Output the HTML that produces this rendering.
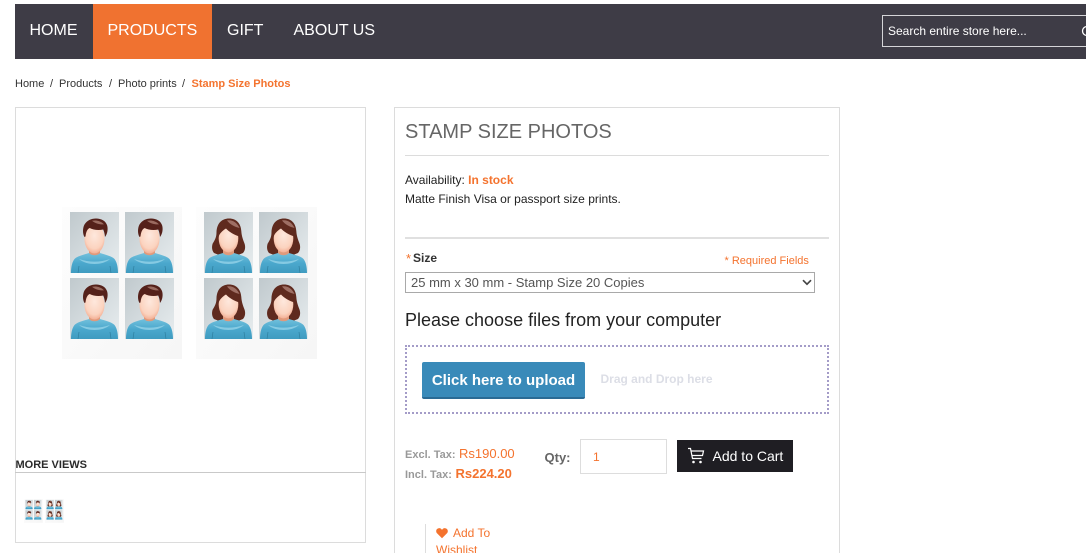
<!DOCTYPE html>
<html lang="en">
<head>
<meta charset="utf-8">
<title>Stamp Size Photos</title>
<style>
html,body{margin:0;padding:0;width:1086px;height:553px;overflow:hidden;background:#fff;font-family:"Liberation Sans",Arial,sans-serif;}
#wrap{position:relative;width:1086px;height:553px;overflow:hidden;background:#fff;}
.a{position:absolute;white-space:nowrap;}
.o{color:#f4732e;}
</style>
</head>
<body>
<div id="wrap">
<svg width="0" height="0" style="position:absolute">
<defs>
<linearGradient id="bg" x1="0" y1="0" x2="1" y2="1"><stop offset="0" stop-color="#c0c9cd"/><stop offset=".55" stop-color="#d6dde0"/><stop offset="1" stop-color="#e8edef"/></linearGradient>
<linearGradient id="shirt" x1="0" y1="0" x2="0" y2="1"><stop offset="0" stop-color="#72c0dc"/><stop offset=".5" stop-color="#4ba8cd"/><stop offset="1" stop-color="#3f9bc0"/></linearGradient>
<radialGradient id="skin" cx=".5" cy=".38" r=".65"><stop offset="0" stop-color="#fee8dd"/><stop offset=".7" stop-color="#fbd3bf"/><stop offset="1" stop-color="#f2a98d"/></radialGradient>
<linearGradient id="sheet" x1="0" y1="0" x2="1" y2="1"><stop offset="0" stop-color="#fdfdfd"/><stop offset="1" stop-color="#f6f6f6"/></linearGradient>
<symbol id="shoulders" viewBox="0 0 49 61">
<path d="M19 34h11v8c0 2-2.500 3.500-5.500 3.500S19 44 19 42z" fill="#e09a7c"/>
<path d="M1 61c0-7 1.500-12 4-14.500 3-2.500 9-4 14-5.500 1.300 1.600 3.200 2.200 5.500 2.200s4.200-.6 5.500-2.200c5 1.500 11 3 14 5.500 2.500 2.500 4 7.500 4 14.500z" fill="url(#shirt)"/>
<path d="M9 47c5 1.800 10.500 2.600 15.500 2.600S35 48.800 40 47c-4 3.500-10 5-15.500 5S13 50.500 9 47z" fill="#9ad6e9" opacity=".75"/>
<path d="M8 61l1-7M41 61l-1-7" stroke="#2f7f9f" stroke-width=".7"/>
</symbol>
<symbol id="man" viewBox="0 0 49 61">
<rect width="49" height="61" fill="url(#bg)"/>
<use href="#shoulders" width="49" height="61"/>
<ellipse cx="24.500" cy="27" rx="10" ry="14.500" fill="url(#skin)"/>
<path d="M14.500 25C12.500 22 12.500 16 14.500 12.500 17 8.500 21 6.500 26 6.500c5.500 0 9.500 2.500 11 6.500 1.200 3.500.7 8.500-2 12-.3-3-.8-5.500-1.800-7.500-4.500 1-10 .5-13.500-1.500-2.500 1-3.700 4-4.200 8.500z" fill="#55211a"/>
<path d="M22 8.800c4-1 9 .2 12 3.500-3.500.5-8.500-.5-12-3.500z" fill="#9a6b60"/>
</symbol>
<symbol id="woman" viewBox="0 0 49 61">
<rect width="49" height="61" fill="url(#bg)"/>
<path d="M12.500 20C13 11 18 6.500 25 6.500c7.500 0 11.800 5 12.300 12.500.3 5 1.700 8.500 3.200 12.500 1.200 3.500.7 7-1.500 9.500l-5 2H15l-5-2c-2-2.500-2.500-6-1.300-9.500 2.500-4 3.800-6.500 3.800-11.500z" fill="#5f2a1e"/>
<use href="#shoulders" width="49" height="61"/>
<ellipse cx="24.500" cy="26.500" rx="9.800" ry="14" fill="url(#skin)"/>
<path d="M14.200 26C13 17 18 9 25 8.500c6.500-.5 11 4.500 10.500 16-5-1.500-10.500-4.500-13.500-8-3.500 2-6.700 5-7.800 9.500z" fill="#5f2a1e"/>
<path d="M23 8.500c5-1 10 2 12.500 7.500-4.500-1-9.500-3.500-12.500-7.500z" fill="#9e6f64"/>
</symbol>
<symbol id="sheets" viewBox="0 0 255 153">
<rect x="0" y="0" width="120" height="152" fill="url(#sheet)"/>
<rect x="134" y="0" width="121" height="152" fill="url(#sheet)"/>
<use href="#man" x="8" y="5" width="49" height="61"/>
<use href="#man" x="63" y="5" width="49" height="61"/>
<use href="#man" x="8" y="71" width="49" height="61"/>
<use href="#man" x="63" y="71" width="49" height="61"/>
<use href="#woman" x="142" y="5" width="49" height="61"/>
<use href="#woman" x="197" y="5" width="49" height="61"/>
<use href="#woman" x="142" y="71" width="49" height="61"/>
<use href="#woman" x="197" y="71" width="49" height="61"/>
</symbol>
</defs>
</svg>

<!-- nav -->
<div class="a" style="left:15px;top:4px;width:1071px;height:55px;background:#3e3c46"></div>
<div class="a" style="left:93px;top:4px;width:119px;height:55px;background:#f07230"></div>
<div class="a" style="left:29.500px;top:22px;font-size:16px;line-height:18px;color:#fff">HOME</div>
<div class="a" style="left:107.500px;top:22px;font-size:16px;line-height:18px;color:#fff">PRODUCTS</div>
<div class="a" style="left:227px;top:22px;font-size:16px;line-height:18px;color:#fff">GIFT</div>
<div class="a" style="left:293.500px;top:22px;font-size:16px;line-height:18px;color:#fff">ABOUT US</div>
<div class="a" style="left:882px;top:15px;width:204px;height:32px;box-sizing:border-box;border:1px solid #d5d5d8;border-right:0"></div>
<div class="a" style="left:888px;top:24px;font-size:12px;line-height:15px;color:#fff">Search entire store here...</div>
<svg class="a" style="left:1080px;top:24px" width="6" height="15" viewBox="0 0 6 15"><circle cx="7" cy="7" r="4.500" fill="none" stroke="#fff" stroke-width="1.300"/></svg>

<!-- breadcrumb -->
<div class="a" style="left:15px;top:77px;font-size:11px;line-height:14px;color:#333">Home</div>
<div class="a" style="left:50px;top:77px;font-size:11px;line-height:14px;color:#333">/</div>
<div class="a" style="left:59px;top:77px;font-size:11px;line-height:14px;color:#333">Products</div>
<div class="a" style="left:109px;top:77px;font-size:11px;line-height:14px;color:#333">/</div>
<div class="a" style="left:118px;top:77px;font-size:11px;line-height:14px;color:#333">Photo prints</div>
<div class="a" style="left:182px;top:77px;font-size:11px;line-height:14px;color:#333">/</div>
<div class="a o" style="left:191.500px;top:77px;font-size:11px;line-height:14px;font-weight:bold">Stamp Size Photos</div>

<!-- left panel -->
<div class="a" style="left:15px;top:107px;width:351px;height:436px;box-sizing:border-box;border:1px solid #dcdcdc"></div>
<svg class="a" style="left:62px;top:207px" width="255" height="153"><use href="#sheets" width="255" height="153"/></svg>
<div class="a" style="left:15.500px;top:459px;font-size:11px;line-height:13px;font-weight:bold;color:#2a2a2a">MORE VIEWS</div>
<div class="a" style="left:15px;top:472px;width:351px;height:1px;background:#c9c9c9"></div>
<svg class="a" style="left:24px;top:499px" width="40" height="24"><use href="#sheets" width="40" height="24"/></svg>

<!-- right panel -->
<div class="a" style="left:394px;top:107px;width:446px;height:460px;box-sizing:border-box;border:1px solid #dcdcdc"></div>
<div class="a" style="left:405px;top:119.500px;font-size:20px;line-height:24px;color:#666">STAMP SIZE PHOTOS</div>
<div class="a" style="left:405px;top:155px;width:424px;height:1px;background:#dcdcdc"></div>
<div class="a" style="left:405px;top:173px;font-size:12px;line-height:14px;color:#222">Availability: <b class="o">In stock</b></div>
<div class="a" style="left:405px;top:192px;font-size:12px;line-height:14px;color:#222">Matte Finish Visa or passport size prints.</div>
<div class="a" style="left:405px;top:237px;width:424px;height:2px;background:#e0e0e0"></div>
<div class="a o" style="left:406px;top:251px;font-size:13px;line-height:15px">*</div>
<div class="a" style="left:413px;top:251px;font-size:12px;line-height:15px;font-weight:bold;color:#333">Size</div>
<div class="a o" style="left:724.500px;top:254px;font-size:11px;line-height:14px">* Required Fields</div>
<div class="a" style="left:405px;top:272px;width:410px;height:21px;box-sizing:border-box;border:1px solid #a9a9a9;background:#fff"></div>
<div class="a" style="left:411px;top:275px;font-size:13px;line-height:15px;color:#555">25 mm x 30 mm - Stamp Size 20 Copies</div>
<svg class="a" style="left:802px;top:279px" width="10" height="7" viewBox="0 0 10 7"><path d="M1 1.200l4 4 4-4" fill="none" stroke="#444" stroke-width="1.700"/></svg>
<div class="a" style="left:405px;top:309px;font-size:18px;line-height:22px;color:#222">Please choose files from your computer</div>
<div class="a" style="left:405px;top:345px;width:424px;height:69px;box-sizing:border-box;border:2px dotted #a49cc8"></div>
<div class="a" style="left:422px;top:362px;width:163px;height:37px;box-sizing:border-box;background:#398ab9;border-bottom:2px solid #2a6a94;border-radius:2px;color:#fff;font-size:15px;font-weight:bold;line-height:37px;text-align:center">Click here to upload</div>
<div class="a" style="left:600.500px;top:372px;font-size:12px;line-height:14px;font-weight:bold;color:#dcdee6">Drag and Drop here</div>

<!-- price -->
<div class="a" style="left:405px;top:449px;font-size:11px;line-height:13px;font-weight:bold;color:#999">Excl. Tax:</div>
<div class="a o" style="left:459px;top:446px;font-size:13px;line-height:15px">Rs190.00</div>
<div class="a" style="left:405px;top:469px;font-size:11px;line-height:13px;font-weight:bold;color:#999">Incl. Tax:</div>
<div class="a o" style="left:455.500px;top:466px;font-size:13px;line-height:15px;font-weight:bold">Rs224.20</div>
<div class="a" style="left:544.500px;top:450px;font-size:13px;line-height:15px;font-weight:bold;color:#666">Qty:</div>
<div class="a" style="left:580px;top:439px;width:87px;height:35px;box-sizing:border-box;border:1px solid #ddd"></div>
<div class="a o" style="left:593px;top:450px;font-size:12px;line-height:15px">1</div>
<div class="a" style="left:677px;top:440px;width:116px;height:32px;background:#1f1e23"></div>
<svg class="a" style="left:687px;top:447px" width="18" height="18" viewBox="0 0 18 18"><path d="M1 1.500h2.500l2 10h9M4 4h12.500l-1 4.500H5" fill="none" stroke="#fff" stroke-width="1.200"/><circle cx="6.500" cy="15" r="1.300" fill="#fff"/><circle cx="13.500" cy="15" r="1.300" fill="#fff"/></svg>
<div class="a" style="left:712.500px;top:448px;font-size:14px;line-height:17px;color:#fff">Add to Cart</div>

<!-- wishlist -->
<div class="a" style="left:425px;top:524px;width:1px;height:29px;background:#ddd"></div>
<svg class="a" style="left:436px;top:527px" width="12" height="12" viewBox="0 0 12 12"><path d="M6 11.300L1 6.300C-.5 4.500.1 1.500 2.800 1.200 4.300 1 5.400 1.900 6 2.900 6.600 1.900 7.700 1 9.200 1.200c2.700.3 3.300 3.300 1.800 5.100z" fill="#f4732e"/></svg>
<div class="a o" style="left:453px;top:526px;font-size:12px;line-height:14px">Add To</div>
<div class="a o" style="left:436px;top:543px;font-size:12px;line-height:14px">Wishlist</div>
</div>
</body>
</html>
